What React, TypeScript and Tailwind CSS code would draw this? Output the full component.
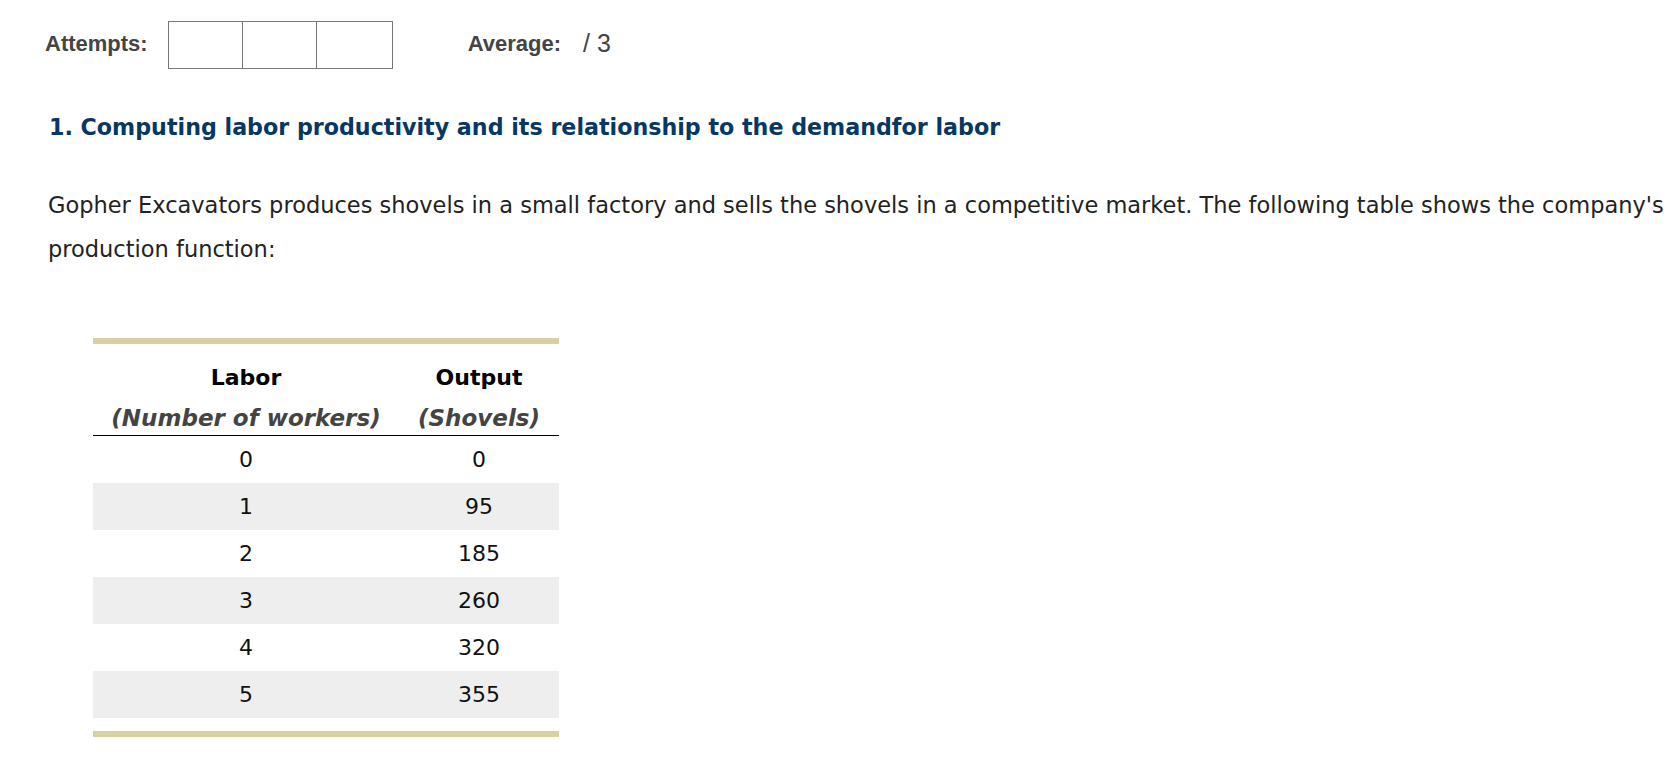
import React from "react";

const rows: [string, string][] = [
  ["0", "0"],
  ["1", "95"],
  ["2", "185"],
  ["3", "260"],
  ["4", "320"],
  ["5", "355"],
];

export default function App() {
  return (
    <div className="w-[1680px] min-h-[767px] bg-white overflow-hidden">
      <div className="flex items-center pt-[21px] pl-[45px]">
        <span className="-mt-[3px] text-[#444] text-[22px] font-bold [font-family:'Liberation_Sans',Arial,sans-serif]">Attempts:</span>
        <div className="ml-[20px] flex border border-[#777]">
          <div className="w-[74px] h-[46px] border-r border-[#777]" />
          <div className="w-[74px] h-[46px] border-r border-[#777]" />
          <div className="w-[75px] h-[46px]" />
        </div>
        <span className="-mt-[3px] ml-[75px] text-[#444] text-[22px] font-bold [font-family:'Liberation_Sans',Arial,sans-serif]">Average:</span>
        <span className="-mt-[3px] ml-[22px] text-[#444] text-[25px] [font-family:'Liberation_Sans',Arial,sans-serif]">/ 3</span>
      </div>
      <h1 className="mt-[43px] pl-[49px] text-[#073763] text-[22.2px] leading-[30px] font-bold [font-family:'DejaVu_Sans',Verdana,sans-serif]">
        1. Computing labor productivity and its relationship to the demandfor labor
      </h1>
      <p className="mt-[41px] pl-[48px] pr-[8px] text-[#222] text-[22.5px] leading-[44px] [font-family:'DejaVu_Sans',Verdana,sans-serif]">
        Gopher Excavators produces shovels in a small factory and sells the shovels in a competitive market. The following table shows the company's production function:
      </p>
      <div className="mt-[67px] ml-[93px] w-[466px] [font-family:'DejaVu_Sans',Verdana,sans-serif]">
        <div className="h-[6px] bg-[#d9cfa4]" />
        <div className="flex border-b border-black pt-[14px]">
          <div className="w-[306px] text-center -mb-[3px]">
            <div className="font-bold text-black text-[22px] leading-[40px]">Labor</div>
            <div className="font-bold italic text-[#444] text-[23px] leading-[40px]">(Number of workers)</div>
          </div>
          <div className="flex-1 text-center -mb-[3px]">
            <div className="font-bold text-black text-[22px] leading-[40px]">Output</div>
            <div className="font-bold italic text-[#444] text-[23px] leading-[40px]">(Shovels)</div>
          </div>
        </div>
        {rows.map(([a, b], i) => (
          <div key={i} className={`flex h-[47px] items-center text-[22px] text-[#111] ${i % 2 === 1 ? "bg-[#eeeeee]" : "bg-white"}`}>
            <div className="w-[306px] text-center">{a}</div>
            <div className="flex-1 text-center">{b}</div>
          </div>
        ))}
        <div className="mt-[13px] h-[6px] bg-[#d9cfa4]" />
      </div>
    </div>
  );
}
